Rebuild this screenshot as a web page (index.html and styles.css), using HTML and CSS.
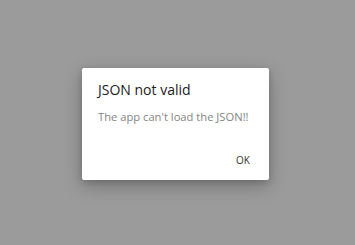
FILE: index.html
```html
<!DOCTYPE html>
<html>
<head>
<meta charset="utf-8">
<link rel="stylesheet" href="styles.css">
</head>
<body>
<div class="overlay">
  <div class="dialog">
    <div class="title">JSON not valid</div>
    <div class="content">The app can't load the JSON!!</div>
    <div class="actions"><button class="btn">OK</button></div>
  </div>
</div>
</body>
</html>
```
FILE: styles.css
```css
html, body {
  margin: 0;
  height: 100%;
}
body {
  background: #9b9b9b;
  font-family: "Open Sans", sans-serif;
}
.overlay {
  height: 100%;
  display: flex;
  align-items: center;
  justify-content: flex-start;
  padding-left: 82px;
  padding-top: 2px;
  box-sizing: border-box;
}
.dialog {
  width: 187px;
  height: 112px;
  background: #fff;
  border-radius: 2px;
  box-shadow: 0 6px 18px rgba(0,0,0,0.25), 0 2px 6px rgba(0,0,0,0.15);
  box-sizing: border-box;
  padding: 13px 16px 0 16px;
  display: flex;
  flex-direction: column;
}
.title {
  font-size: 14px;
  color: #212121;
  line-height: 18px;
}
.content {
  margin-top: 10px;
  font-size: 11.2px;
  color: #858585;
  line-height: 16px;
}
.actions {
  margin-top: auto;
  display: flex;
  justify-content: flex-end;
  padding-bottom: 13px;
}
.btn {
  border: 0;
  background: none;
  font-family: "Open Sans", sans-serif;
  font-size: 10px;
  color: #333;
  padding: 0 3px 0 0;
  line-height: 14px;
}
```
